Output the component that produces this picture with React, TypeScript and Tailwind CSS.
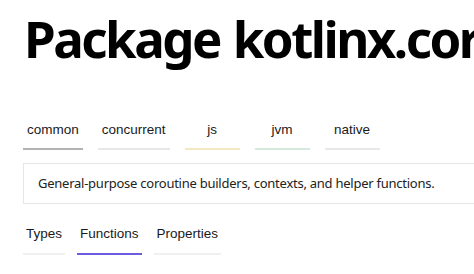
const platforms = [
  { name: "common", line: "border-[#b3b3b3]" },
  { name: "concurrent", line: "border-[#e8e8e8]" },
  { name: "js", line: "border-[#f6e7c3]" },
  { name: "jvm", line: "border-[#d3eadc]" },
  { name: "native", line: "border-[#e8e8e8]" },
];

const sections = [
  { name: "Types", active: false },
  { name: "Functions", active: true },
  { name: "Properties", active: false },
];

export default function App() {
  return (
    <div className="w-[474px] h-[274px] overflow-hidden bg-white pl-[23px] text-[#19191c]">
      <h1 className="pt-[6px] pl-[1px] whitespace-nowrap font-['Noto_Sans',sans-serif] text-[51px] font-bold leading-[64px] tracking-[-2.5px] [word-spacing:2px] text-black">
        Package kotlinx.coroutines
      </h1>

      <div className="mt-[50px] flex gap-[15px] font-['Liberation_Sans',Arial,sans-serif] text-[13.5px]">
        {platforms.map((p) => (
          <div
            key={p.name}
            className={`min-w-[55px] px-[4px] pb-[8px] text-center border-b-2 ${p.line}`}
          >
            {p.name}
          </div>
        ))}
      </div>

      <div className="mt-[13px] w-[480px] h-[41px] border border-[#e6e6e6] pl-[14px] flex items-center font-['Noto_Sans',sans-serif] text-[13px] tracking-[-0.25px] text-[#222]">
        General-purpose coroutine builders, contexts, and helper functions.
      </div>

      <div className="mt-[20px] flex gap-[12px] font-['Liberation_Sans',Arial,sans-serif] text-[13.5px]">
        {sections.map((s) => (
          <div
            key={s.name}
            className={`px-[3px] pb-[8px] border-b-2 ${
              s.active ? "border-[#6b5ce0]" : "border-[#f0f0f0]"
            }`}
          >
            {s.name}
          </div>
        ))}
      </div>
    </div>
  );
}
